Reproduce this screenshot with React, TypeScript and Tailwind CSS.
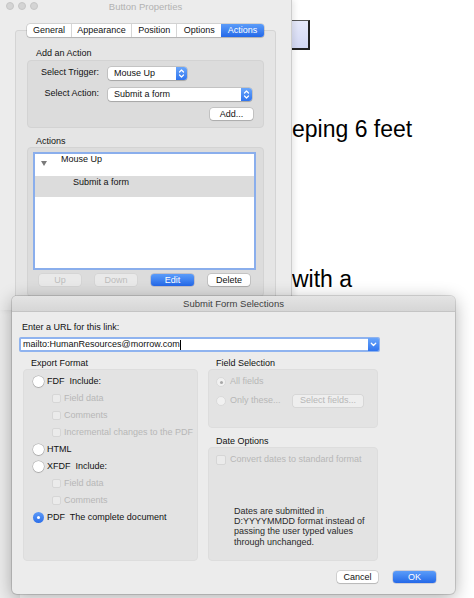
import React from "react";

const Stepper = ({ single = false }: { single?: boolean }) => (
  <div className="absolute right-0 top-0 bottom-0 w-[11px] rounded-r-[3px] bg-gradient-to-b from-[#6aa6fb] to-[#2f74ee] flex items-center justify-center">
    <svg width="11" height="13" viewBox="0 0 11 13">
      {single ? (
        <path d="M3.3 5.3 L5.5 7.5 L7.7 5.3" stroke="white" strokeWidth="1.3" fill="none" strokeLinecap="round" strokeLinejoin="round" />
      ) : (
        <>
          <path d="M3.5 5 L5.5 3 L7.5 5" stroke="white" strokeWidth="1.2" fill="none" strokeLinecap="round" strokeLinejoin="round" />
          <path d="M3.5 8 L5.5 10 L7.5 8" stroke="white" strokeWidth="1.2" fill="none" strokeLinecap="round" strokeLinejoin="round" />
        </>
      )}
    </svg>
  </div>
);

const Popup = ({ label, w }: { label: string; w: string }) => (
  <div className={`relative h-[13px] ${w} bg-white rounded-[3px] shadow-[0_0_0_0.5px_rgba(0,0,0,0.22),0_1px_1px_rgba(0,0,0,0.15)] flex items-center pl-[6px] text-[9px] text-[#111] leading-none`}>
    {label}
    <Stepper />
  </div>
);

const Btn = ({ label, w, kind = "normal" }: { label: string; w: string; kind?: "normal" | "disabled" | "primary" }) => {
  const base = `h-[12px] ${w} rounded-[3px] flex items-center justify-center text-[9px] leading-none`;
  if (kind === "primary")
    return <div className={`${base} bg-gradient-to-b from-[#5b9cf9] to-[#2468e8] text-white shadow-[0_0_0_0.5px_rgba(0,0,80,0.25)]`}>{label}</div>;
  if (kind === "disabled")
    return <div className={`${base} bg-[#e9e9e9] text-[#bdbdbd] shadow-[0_0_0_0.5px_rgba(0,0,0,0.06)]`}>{label}</div>;
  return <div className={`${base} bg-white text-[#111] shadow-[0_0_0_0.5px_rgba(0,0,0,0.22),0_1px_1px_rgba(0,0,0,0.12)]`}>{label}</div>;
};

const Radio = ({ state }: { state: "off" | "on" | "disabledOn" | "disabledOff" }) => {
  if (state === "on")
    return (
      <div className="w-[11px] h-[11px] rounded-full bg-gradient-to-b from-[#5d9af8] to-[#2d6fe9] flex items-center justify-center shrink-0">
        <div className="w-[3px] h-[3px] rounded-full bg-white" />
      </div>
    );
  if (state === "disabledOn")
    return (
      <div className="w-[10px] h-[10px] rounded-full bg-[#f1f1f1] border border-[#dadada] flex items-center justify-center shrink-0">
        <div className="w-[3px] h-[3px] rounded-full bg-[#a8a8a8]" />
      </div>
    );
  if (state === "disabledOff")
    return <div className="w-[10px] h-[10px] rounded-full bg-[#f1f1f1] border border-[#dadada] shrink-0" />;
  return <div className="w-[11px] h-[11px] rounded-full bg-white shadow-[0_0_0_0.5px_rgba(0,0,0,0.25),0_1px_1px_rgba(0,0,0,0.15)] shrink-0" />;
};

const Check = () => <div className="w-[9px] h-[9px] rounded-[2px] bg-[#ebebeb] border border-[#d6d6d6] shrink-0" />;

const CheckRow = ({ label }: { label: string }) => (
  <div className="h-[17px] flex items-center pl-[28px] gap-[3px] text-[9px] text-[#b7b7b7]">
    <Check />
    <span>{label}</span>
  </div>
);

const RadioRow = ({ label, state }: { label: string; state: "off" | "on" }) => (
  <div className="h-[17px] flex items-center pl-[9px] gap-[3px] text-[9px] text-[#111] whitespace-pre">
    <Radio state={state} />
    <span>{label}</span>
  </div>
);

export default function App() {
  const tabs: [string, string][] = [
    ["General", "w-[45px]"],
    ["Appearance", "w-[62px]"],
    ["Position", "w-[46px]"],
    ["Options", "w-[46px]"],
    ["Actions", "w-[44px]"],
  ];
  return (
    <div className="relative w-[474px] h-[598px] bg-white overflow-hidden font-['Liberation_Sans',Arial,sans-serif]">
      {/* background document */}
      <div className="absolute left-[262px] top-[20px] w-[48px] h-[30px] bg-gradient-to-b from-[#e6e9fa] to-[#d3d8f3] border border-[#555] border-r-2 border-b-2 border-r-[#222] border-b-[#222]" />
      <div className="absolute left-[292px] top-[118px] text-[23px] leading-[23px] text-black whitespace-nowrap">eping 6 feet</div>
      <div className="absolute left-[292px] top-[268px] text-[23px] leading-[23px] text-black whitespace-nowrap">with a</div>
      <div className="absolute left-0 top-[510px] w-[40px] h-[1px] bg-black" />
      <div className="absolute left-0 top-[578px] w-[40px] h-[1px] bg-black" />
      <div className="absolute left-0 top-[300px] w-[20px] h-[298px] bg-[#ededed]" />

      {/* Button Properties window */}
      <div className="absolute left-0 top-0 w-[292px] h-[310px] bg-[#ececec] border-r border-[#cdcdcd] shadow-[2px_0_6px_rgba(0,0,0,0.1)]">
        <div className="relative h-[14px] flex items-center justify-center">
          <div className="absolute left-[6px] top-[2px] flex gap-[4px]">
            <div className="w-[8px] h-[8px] rounded-full bg-[#d4d4d4] border border-[#c6c6c6]" />
            <div className="w-[8px] h-[8px] rounded-full bg-[#d4d4d4] border border-[#c6c6c6]" />
            <div className="w-[8px] h-[8px] rounded-full bg-[#d4d4d4] border border-[#c6c6c6]" />
          </div>
          <span className="text-[9.5px] text-[#b2b2b2] leading-none">Button Properties</span>
        </div>
        <div className="px-[15px]">
          <div className="mt-[16px] h-[275px] bg-[#e5e5e5] border border-[#d4d4d4] rounded-[3px] px-[11px]">
            <div className="-mt-[7px] h-[13px] flex justify-center">
              <div className="flex bg-white rounded-[3px] shadow-[0_0_0_0.5px_rgba(0,0,0,0.22),0_1px_1px_rgba(0,0,0,0.12)] overflow-hidden">
                {tabs.map(([t, w], i) => (
                  <div
                    key={t}
                    className={`${w} h-[13px] flex items-center justify-center text-[9px] leading-none ${
                      t === "Actions"
                        ? "bg-gradient-to-b from-[#5b9cf9] to-[#2468e8] text-white"
                        : "text-[#111]"
                    } ${i > 0 && t !== "Actions" ? "border-l border-[#d6d6d6]" : ""}`}
                  >
                    {t}
                  </div>
                ))}
              </div>
            </div>
            <div className="mt-[11px] h-[11px] pl-[9px] text-[9px] leading-[11px] text-[#111]">Add an Action</div>
            <div className="mt-[1px] h-[68px] bg-[#dcdcdc] border border-[#d3d3d3] rounded-[4px]">
              <div className="pt-[5px] h-[19px] flex items-center">
                <div className="w-[71px] text-right text-[9px] text-[#111]">Select Trigger:</div>
                <div className="ml-[9px]">
                  <Popup label="Mouse Up" w="w-[79px]" />
                </div>
              </div>
              <div className="mt-[7px] h-[14px] flex items-center">
                <div className="w-[71px] text-right text-[9px] text-[#111]">Select Action:</div>
                <div className="ml-[9px]">
                  <Popup label="Submit a form" w="w-[144px]" />
                </div>
              </div>
              <div className="mt-[7px] h-[13px] flex justify-end pr-[10px]">
                <Btn label="Add..." w="w-[43px]" />
              </div>
            </div>
            <div className="mt-[8px] h-[11px] pl-[9px] text-[9px] leading-[11px] text-[#111]">Actions</div>
            <div className="h-[150px] bg-[#dcdcdc] border border-[#d3d3d3] rounded-[4px]">
              <div className="mt-[4px] ml-[5px] w-[223px] h-[118px] bg-white border-2 border-[#8aaeec] text-[9px] text-[#111]">
                <div className="h-[22px] flex items-start">
                  <svg className="ml-[6px] mt-[7px]" width="6" height="5" viewBox="0 0 6 5">
                    <path d="M0 0 L6 0 L3 5 Z" fill="#7a7a7a" />
                  </svg>
                  <span className="ml-[14px] leading-[11px]">Mouse Up</span>
                </div>
                <div className="h-[21px] bg-[#dcdcdc] pl-[38px] pt-[1px] leading-[11px]">Submit a form</div>
              </div>
              <div className="mt-[4px] pl-[11px] flex gap-[14px]">
                <Btn label="Up" w="w-[42px]" kind="disabled" />
                <Btn label="Down" w="w-[42px]" kind="disabled" />
                <Btn label="Edit" w="w-[43px]" kind="primary" />
                <Btn label="Delete" w="w-[42px]" />
              </div>
            </div>
          </div>
        </div>
      </div>

      {/* Submit Form Selections dialog */}
      <div className="absolute left-[12px] top-[296px] w-[443px] h-[298px] bg-[#ececec] rounded-[5px] overflow-hidden shadow-[0_0_0_1px_rgba(0,0,0,0.13),0_4px_18px_rgba(0,0,0,0.32)]">
        <div className="h-[16px] bg-gradient-to-b from-[#e4e4e4] to-[#d6d6d6] border-b border-[#c4c4c4] flex items-center justify-center">
          <span className="text-[9.5px] text-[#404040] leading-none">Submit Form Selections</span>
        </div>
        <div className="mt-[10px] h-[11px] pl-[10px] text-[9px] leading-[11px] text-[#111]">Enter a URL for this link:</div>
        <div className="mt-[4px] ml-[7px] relative w-[361px] h-[15px] bg-white border-2 border-[#8fb3ef] rounded-[2px] flex items-center pl-[2px] text-[9px] text-[#111] leading-none">
          <span>mailto:HumanResources@morrow.com</span>
          <span className="w-[1px] h-[10px] bg-black" />
          <div className="absolute -right-[1px] -top-[1px] -bottom-[1px] w-[11px] rounded-r-[2px] bg-gradient-to-b from-[#6aa6fb] to-[#2f74ee] flex items-center justify-center">
            <svg width="11" height="13" viewBox="0 0 11 13">
              <path d="M3.3 5.3 L5.5 7.5 L7.7 5.3" stroke="white" strokeWidth="1.3" fill="none" strokeLinecap="round" strokeLinejoin="round" />
            </svg>
          </div>
        </div>
        <div className="mt-[6px] ml-[11px] flex gap-[10px]">
          <div className="w-[175px]">
            <div className="h-[11px] pl-[8px] text-[9px] leading-[11px] text-[#111]">Export Format</div>
            <div className="h-[192px] bg-[#e3e3e3] border border-[#dddddd] rounded-[4px] pt-[3px]">
              <RadioRow label="FDF  Include:" state="off" />
              <CheckRow label="Field data" />
              <CheckRow label="Comments" />
              <CheckRow label="Incremental changes to the PDF" />
              <RadioRow label="HTML" state="off" />
              <RadioRow label="XFDF  Include:" state="off" />
              <CheckRow label="Field data" />
              <CheckRow label="Comments" />
              <RadioRow label="PDF  The complete document" state="on" />
            </div>
          </div>
          <div className="w-[170px]">
            <div className="h-[11px] pl-[8px] text-[9px] leading-[11px] text-[#111]">Field Selection</div>
            <div className="h-[59px] bg-[#e3e3e3] border border-[#dddddd] rounded-[4px] pt-[4px]">
              <div className="h-[16px] flex items-center pl-[7px] gap-[4px] text-[9px] text-[#b7b7b7]">
                <Radio state="disabledOn" />
                <span>All fields</span>
              </div>
              <div className="h-[21px] flex items-center pl-[7px] text-[9px] text-[#b7b7b7]">
                <Radio state="disabledOff" />
                <span className="ml-[4px] w-[63px]">Only these...</span>
                <div className="w-[70px] h-[12px] bg-[#eeeeee] rounded-[2px] shadow-[0_0_0_0.5px_rgba(0,0,0,0.1)] flex items-center justify-center leading-none">
                  Select fields...
                </div>
              </div>
            </div>
            <div className="mt-[8px] h-[11px] pl-[8px] text-[9px] leading-[11px] text-[#111]">Date Options</div>
            <div className="h-[114px] bg-[#e3e3e3] border border-[#dddddd] rounded-[4px] pt-[3px] flex flex-col">
              <div className="h-[17px] flex items-center pl-[7px] gap-[4px] text-[9px] text-[#b7b7b7]">
                <div className="w-[10px] h-[10px] rounded-[2px] bg-[#ebebeb] border border-[#d6d6d6] shrink-0" />
                <span>Convert dates to standard format</span>
              </div>
              <div className="mt-auto pb-[13px] pl-[25px] pr-[6px] text-[9px] leading-[10.3px] text-[#2a2a2a]">
                Dates are submitted in
                <br />
                D:YYYYMMDD format instead of
                <br />
                passing the user typed values
                <br />
                through unchanged.
              </div>
            </div>
          </div>
        </div>
        <div className="mt-[10px] pr-[19px] flex justify-end gap-[15px]">
          <Btn label="Cancel" w="w-[41px]" />
          <Btn label="OK" w="w-[43px]" kind="primary" />
        </div>
      </div>
    </div>
  );
}
